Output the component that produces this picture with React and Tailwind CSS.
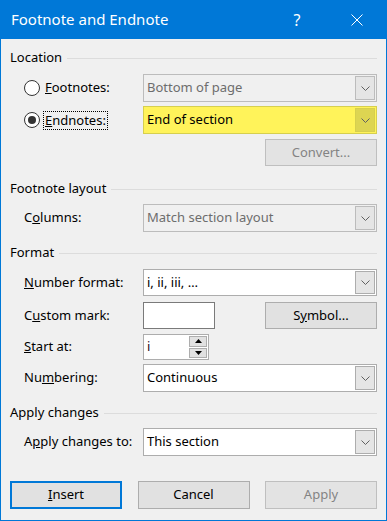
import React from 'react';

const font = { fontFamily: '"Noto Sans", "Open Sans", sans-serif' };

const Chevron = () => (
  <svg width="9" height="5" viewBox="0 0 9 5" fill="none">
    <path d="M0.5 0.5 L4.5 4.5 L8.5 0.5" stroke="#606060" strokeWidth="1" />
  </svg>
);

const Heading = ({ children, className = '' }) => (
  <div className={`flex items-center h-[16px] pl-[9px] pr-[9px] ${className}`}>
    <span className="text-[13px] text-black leading-none">{children}</span>
    <div className="flex-1 h-px bg-[#dcdcdc] ml-[5px] mt-[2px]" />
  </div>
);

const Combo = ({ value, disabled, highlight }) => {
  let box = 'bg-white border-[#adadad] text-black';
  let btn = 'bg-[#e5e5e5] border-[#adadad]';
  if (disabled) {
    box = 'bg-[#f0f0f0] border-[#bcbcbc] text-[#6d6d6d]';
    btn = 'bg-[#e5e5e5] border-[#bcbcbc]';
  }
  if (highlight) {
    box = 'bg-[#fff35a] border-[#d6cf4e] text-black';
    btn = 'bg-[#ddd552] border-[#d6cf4e]';
  }
  return (
    <div className={`flex w-[234px] h-full border ${box}`}>
      <div className="flex-1 flex items-center pl-[3px] text-[13px]">{value}</div>
      <div className={`w-[20px] m-px border flex items-center justify-center ${btn}`}>
        <Chevron />
      </div>
    </div>
  );
};

const Button = ({ children, disabled, primary, className = '' }) => (
  <div
    className={`w-[112px] h-full flex items-center justify-center text-[13px] bg-[#e1e1e1] ${
      primary ? 'border-2 border-[#0078d7]' : 'border border-[#adadad]'
    } ${disabled ? 'text-[#838383] border-[#bfbfbf] bg-[#e3e3e3]' : 'text-black'} ${className}`}
  >
    {children}
  </div>
);

const Row = ({ label, children, className = '' }) => (
  <div className={`flex items-stretch pl-[23px] pr-[9px] ${className}`}>
    <div className="w-[119px] flex items-center text-[13px] text-black">{label}</div>
    {children}
  </div>
);

const Radio = ({ checked }) => (
  <div className="w-[16px] h-[16px] rounded-full border border-[#333] bg-white flex items-center justify-center">
    {checked && <div className="w-[8px] h-[8px] rounded-full bg-[#333]" />}
  </div>
);

export default function App() {
  return (
    <div
      style={font}
      className="w-[387px] h-[521px] bg-[#f0f0f0] border-x border-b border-[#0078d7] flex flex-col"
    >
      <div className="h-[39px] -mx-px bg-[#0078d7] flex items-center text-white shrink-0">
        <span className="ml-[11px] text-[15px] flex-1">Footnote and Endnote</span>
        <span className="text-[16px] w-[12px] mr-[48px] text-center">?</span>
        <svg width="12" height="12" viewBox="0 0 12 12" className="mr-[24px]">
          <path d="M0.5 0.5 L11.5 11.5 M11.5 0.5 L0.5 11.5" stroke="white" strokeWidth="1" />
        </svg>
      </div>

      <Heading className="mt-[10px]">Location</Heading>

      <div className="flex items-stretch h-[28px] mt-[9px] pl-[23px] pr-[9px]">
        <div className="w-[119px] flex items-center text-[13px] text-black">
          <Radio />
          <span className="ml-[5px]"><u>F</u>ootnotes:</span>
        </div>
        <Combo value="Bottom of page" disabled />
      </div>

      <div className="flex items-stretch h-[28px] mt-[4px] pl-[23px] pr-[9px]">
        <div className="w-[119px] flex items-center text-[13px] text-black">
          <Radio checked />
          <span className="ml-[3px] px-[1px] border border-dotted border-black leading-[17px]">
            <u>E</u>ndnotes:
          </span>
        </div>
        <Combo value="End of section" highlight />
      </div>

      <div className="flex justify-end h-[27px] mt-[5px] pr-[9px]">
        <Button disabled>Convert...</Button>
      </div>

      <Heading className="mt-[14px]">Footnote layout</Heading>

      <Row label={<span>C<u>o</u>lumns:</span>} className="h-[28px] mt-[8px]">
        <Combo value="Match section layout" disabled />
      </Row>

      <Heading className="mt-[12px]">Format</Heading>

      <Row label={<span><u>N</u>umber format:</span>} className="h-[27px] mt-[9px]">
        <Combo value="i, ii, iii, …" />
      </Row>

      <Row label={<span>C<u>u</u>stom mark:</span>} className="h-[27px] mt-[6px]">
        <div className="w-[72px] bg-white border border-[#7a7a7a]" />
        <div className="flex-1" />
        <Button>S<u>y</u>mbol...</Button>
      </Row>

      <Row label={<span><u>S</u>tart at:</span>} className="h-[26px] mt-[5px]">
        <div className="w-[66px] bg-white border border-[#adadad] flex">
          <div className="flex-1 flex items-center pl-[3px] text-[13px] text-[#2a0a1a]">i</div>
          <div className="w-[20px] flex flex-col gap-px p-px">
            <div className="flex-1 bg-[#e1e1e1] border border-[#adadad] flex items-center justify-center">
              <svg width="7" height="4" viewBox="0 0 7 4"><path d="M3.5 0 L7 4 L0 4 Z" fill="black" /></svg>
            </div>
            <div className="flex-1 bg-[#e1e1e1] border border-[#adadad] flex items-center justify-center">
              <svg width="7" height="4" viewBox="0 0 7 4"><path d="M0 0 L7 0 L3.5 4 Z" fill="black" /></svg>
            </div>
          </div>
        </div>
      </Row>

      <Row label={<span>Nu<u>m</u>bering:</span>} className="h-[28px] mt-[4px]">
        <Combo value="Continuous" />
      </Row>

      <Heading className="mt-[12px]">Apply changes</Heading>

      <Row label={<span>A<u>p</u>ply changes to:</span>} className="h-[28px] mt-[8px]">
        <Combo value="This section" />
      </Row>

      <div className="flex h-[28px] mt-[25px] pl-[9px] pr-[9px] justify-between">
        <Button primary><u>I</u>nsert</Button>
        <Button>Cancel</Button>
        <Button disabled>Apply</Button>
      </div>
    </div>
  );
}
